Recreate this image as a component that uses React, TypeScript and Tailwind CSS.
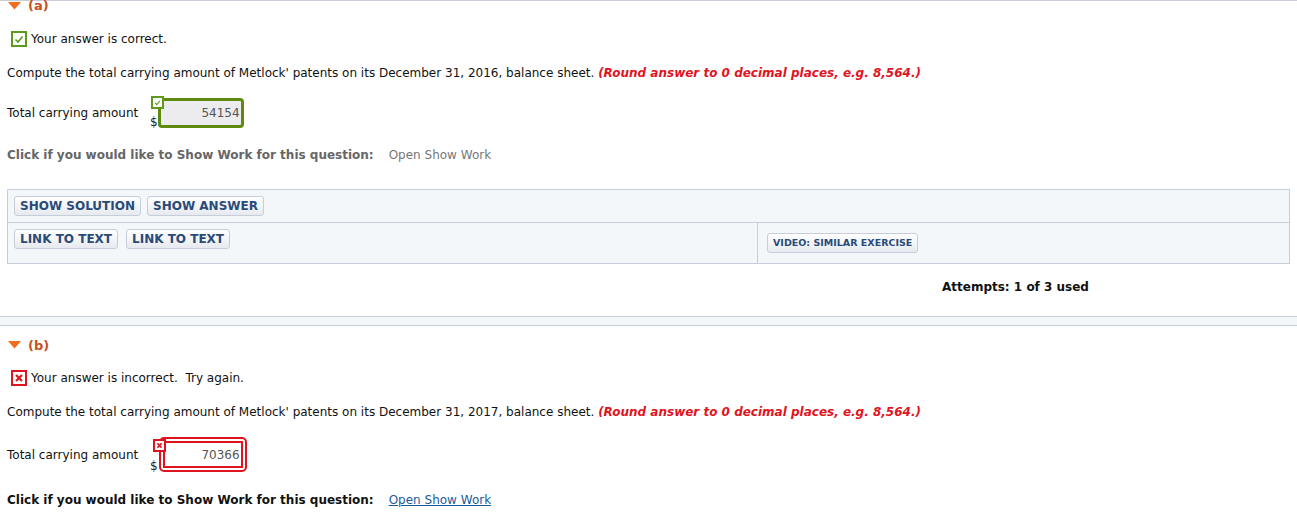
import { ReactNode } from "react";

function Triangle() {
  return (
    <svg width="13" height="8" viewBox="0 0 13 8" className="shrink-0">
      <polygon points="0,0 13,0 6.5,7.5" fill="#f26c1d" />
    </svg>
  );
}

function CheckIcon({ size = 16 }: { size?: number }) {
  return (
    <span
      className="inline-flex items-center justify-center border-2 border-[#5e9a1e] bg-white"
      style={{ width: size, height: size }}
    >
      <svg width={size - 6} height={size - 6} viewBox="0 0 10 10">
        <polyline points="1.5,5.5 4,8 8.5,2.5" fill="none" stroke="#5e9a1e" strokeWidth="1.6" />
      </svg>
    </span>
  );
}

function CrossIcon({ size = 16 }: { size?: number }) {
  return (
    <span
      className="inline-flex items-center justify-center border-2 border-[#e0141e] bg-white"
      style={{ width: size, height: size }}
    >
      <svg width={size - 6} height={size - 6} viewBox="0 0 10 10">
        <path d="M2 2 L8 8 M8 2 L2 8" stroke="#e0141e" strokeWidth="2.2" />
      </svg>
    </span>
  );
}

function Btn({ children, small }: { children: ReactNode; small?: boolean }) {
  return (
    <button
      className={
        "h-[20px] rounded-[3px] border border-[#c6ced9] bg-gradient-to-b from-white to-[#e6eaf0] font-bold text-[#2a4a78] leading-none " +
        (small ? "px-[5px] text-[9.5px]" : "px-[5px] text-[12px]")
      }
    >
      {children}
    </button>
  );
}

function Part({
  label,
  correct,
  year,
  value,
}: {
  label: string;
  correct: boolean;
  year: string;
  value: string;
}) {
  return (
    <div className="px-[7px]">
      <div className="flex items-center gap-[7px] pl-[1px] text-[13px] font-bold text-[#c8501e]">
        <Triangle />
        <span>{label}</span>
      </div>
      <div className="mt-[14px] flex items-center gap-[4px] pl-[4px] text-[12px] text-[#111]">
        {correct ? <CheckIcon /> : <CrossIcon />}
        <span className="whitespace-pre">
          {correct ? "Your answer is correct." : "Your answer is incorrect.  Try again."}
        </span>
      </div>
      <div className="mt-[16px] text-[12px] text-[#111]">
        Compute the total carrying amount of Metlock' patents on its December 31, {year}, balance sheet.{" "}
        <span className="font-bold italic text-[#e0141e]">
          (Round answer to 0 decimal places, e.g. 8,564.)
        </span>
      </div>
      <div className="mt-[16px] flex items-center">
        <span className="w-[143px] text-[12px] text-[#111]">Total carrying amount</span>
        <div className="relative flex items-end">
          <span className="mb-[-3px] text-[12px] text-[#222]">$</span>
          {correct ? (
            <div className="relative">
              <div className="absolute left-[-7px] top-[-9px]">
                <CheckIcon size={13} />
              </div>
              <div className="flex h-[30px] w-[86px] items-center justify-end rounded-[4px] border-[3px] border-[#5e8a0e] bg-[#ececee] pr-[1px] text-[12px] text-[#555]">
                {value}
              </div>
            </div>
          ) : (
            <div className="relative">
              <div className="absolute left-[-5px] top-[-5px] z-10">
                <CrossIcon size={13} />
              </div>
              <div className="ml-[1px] rounded-[5px] border-[2px] border-[#e0141e] p-[2px]">
                <div className="flex h-[27px] w-[80px] items-center justify-end border-[2px] border-[#e0141e] bg-white pr-[1px] text-[12px] text-[#555]">
                  {value}
                </div>
              </div>
            </div>
          )}
        </div>
      </div>
      <div className={"flex items-center text-[12px] " + (correct ? "mt-[18px]" : "mt-[19px]")}>
        <span className={"font-bold " + (correct ? "text-[#666]" : "text-[#111]")}>
          Click if you would like to Show Work for this question:
        </span>
        <span
          className={
            "ml-[15px] " + (correct ? "text-[#777]" : "text-[#1a5c99] underline")
          }
        >
          Open Show Work
        </span>
      </div>
    </div>
  );
}

export default function App() {
  return (
    <div
      className="h-[520px] w-[1297px] overflow-hidden bg-white"
      style={{ fontFamily: "Verdana, 'DejaVu Sans', sans-serif" }}
    >
      <div className="h-[1px] bg-[#c9ced8]" />
      <div className="-mt-[5px]">
        <Part label="(a)" correct year="2016" value="54154" />
      </div>
      <div className="mx-[7px] mt-[25px] border border-[#c6ced9] bg-[#f4f7fa]">
        <div className="flex h-[33px] items-center gap-[6px] border-b border-[#c6ced9] px-[6px]">
          <Btn>SHOW SOLUTION</Btn>
          <Btn>SHOW ANSWER</Btn>
        </div>
        <div className="flex h-[40px]">
          <div className="flex w-[750px] items-start gap-[8px] border-r border-[#c6ced9] px-[6px] pt-[6px]">
            <Btn>LINK TO TEXT</Btn>
            <Btn>LINK TO TEXT</Btn>
          </div>
          <div className="flex items-center px-[9px]">
            <Btn small>VIDEO: SIMILAR EXERCISE</Btn>
          </div>
        </div>
      </div>
      <div className="mt-[14px] pl-[942px] text-[12px] font-bold text-[#111]">Attempts: 1 of 3 used</div>
      <div className="mt-[20px] h-[10px] border-y border-[#c6ced9] bg-[#f4f7fa]" />
      <div className="mt-[10px]">
        <Part label="(b)" correct={false} year="2017" value="70366" />
      </div>
    </div>
  );
}
